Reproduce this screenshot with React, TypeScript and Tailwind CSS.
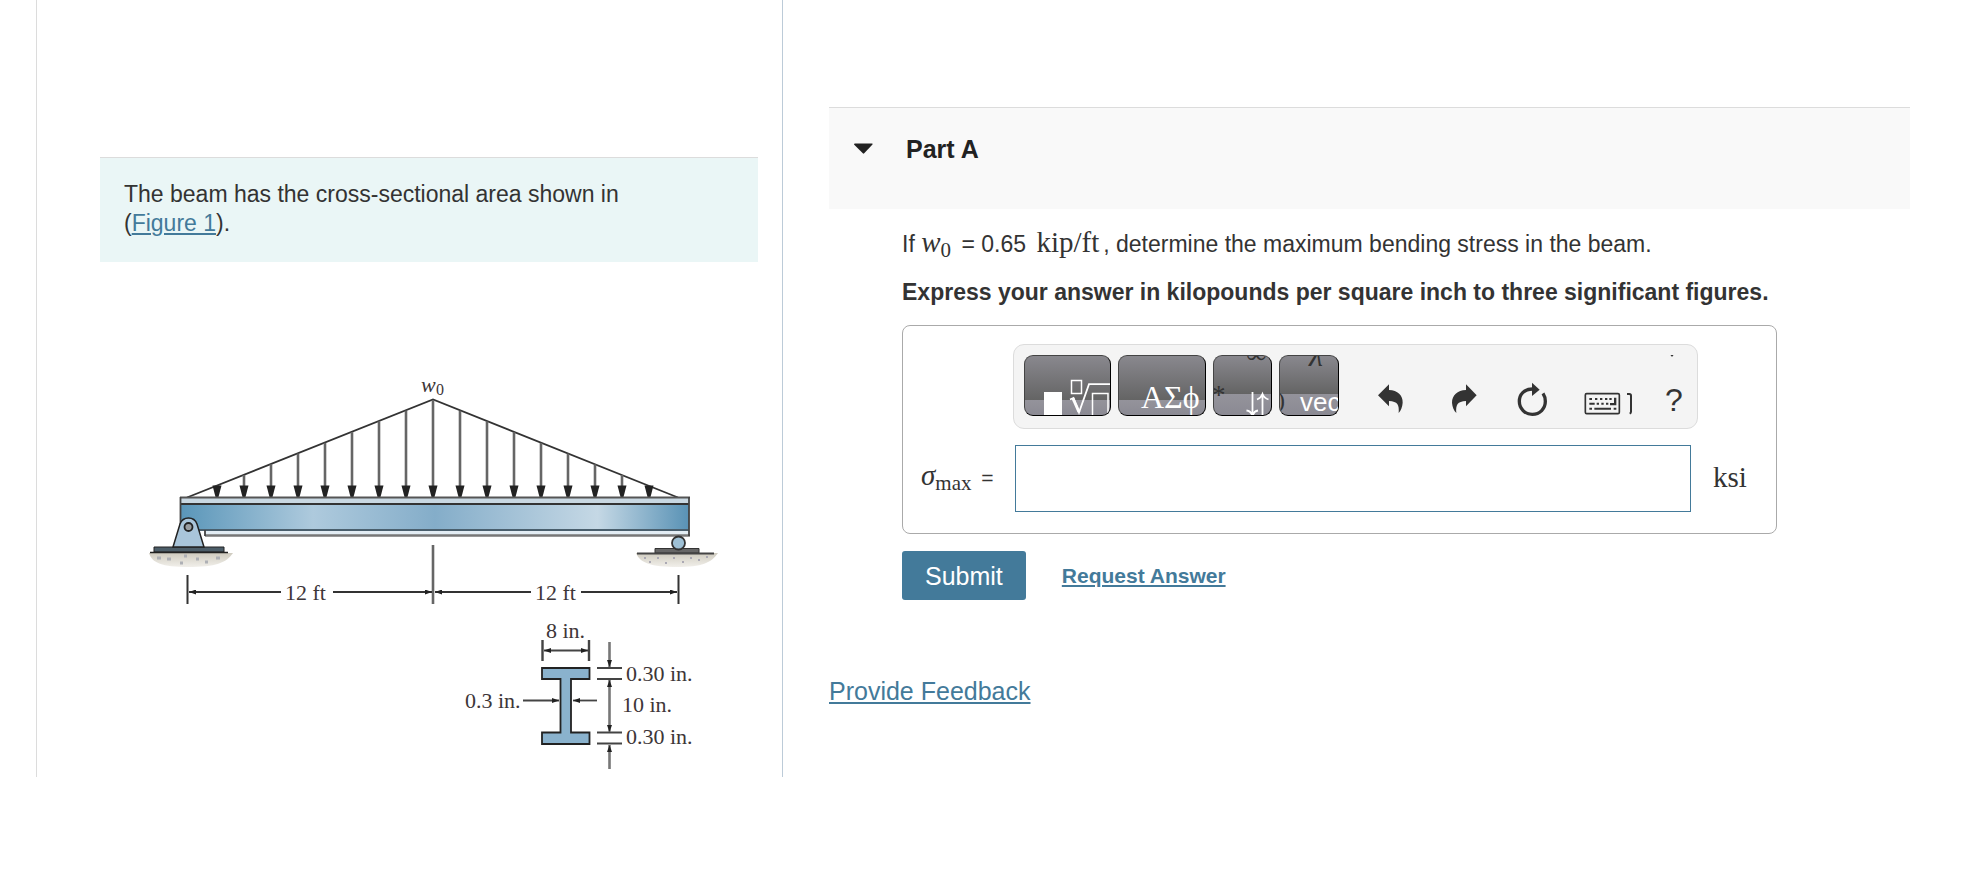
import type { ReactNode } from 'react';

const ARROW_XS = Array.from({ length: 17 }, (_, i) => 217 + i * 27);

function loadTop(x: number) {
  const peak = 433;
  return 400 + Math.abs(x - peak) * 0.397;
}

export default function App() {
  return (
    <main className="grid grid-cols-[747fr_1178fr] items-start bg-white pl-9 font-['Liberation_Sans',Arial,sans-serif] text-[#333]">
      <ProblemPanel />
      <AnswerPanel />
    </main>
  );
}

function ProblemPanel() {
  return (
    <section className="border-l border-l-[#dcdcdc] border-r border-r-[#bccbd8] pt-[157px] pl-[63px] pr-6">
      <div className="border-t border-[#dcdcdc] bg-[#eaf6f6] px-6 pt-[22px] pb-6 text-[23px] leading-[29px]">
        The beam has the cross-sectional area shown in
        <br />(
        <a href="#figure-1" className="text-[#437a9a] underline decoration-2 underline-offset-2">
          Figure 1
        </a>
        ).
      </div>
      <BeamFigure />
    </section>
  );
}

function AnswerPanel() {
  return (
    <section className="pt-[107px] pl-[46px] pr-[51px]">
      {/* Part header */}
      <header className="flex h-[102px] items-start border-t border-[#dcdcdc] bg-[#f9f9f9] pt-[25px] pl-[25px]">
        <button aria-label="Collapse part" className="flex h-8 w-[52px] items-center">
          <svg width="20" height="12" viewBox="0 0 20 12" fill="#222">
            <path d="M0 1.5Q0 .5 1 .5H18Q19 .5 18.5 1.5L10.2 10.3Q9.5 11 8.8 10.3L.5 2Z" />
          </svg>
        </button>
        <h2 className="text-[25px] leading-8 font-bold text-[#222]">Part A</h2>
      </header>

      <div className="pt-[11px] pl-[73px]">
        <p className="h-12 whitespace-nowrap text-[23px] leading-[48px]">
          If{' '}
          <Formula className="mr-1">
            <i>w</i>
            <sub className="text-[21px] leading-none">0</sub>
          </Formula>{' '}
          = 0.65 <Formula className="mx-1">kip/ft</Formula>, determine the maximum bending stress in the beam.
        </p>
        <p className="text-[23px] leading-[48px] font-bold whitespace-nowrap">
          Express your answer in kilopounds per square inch to three significant figures.
        </p>

        {/* Answer box */}
        <div className="mt-[9px] max-w-[875px] rounded-lg border border-[#aaa] pt-[18px] pb-[21px]">
          <div className="pr-[78px] pl-[110px]">
            <Toolbar />
          </div>
          <div className="mt-4 flex items-center">
            <label htmlFor="answer" className="w-[112px] shrink-0 pb-1 pl-[18px] text-[21px] leading-[29px] whitespace-nowrap">
              <Formula className="mr-1">
                <i>σ</i>
                <sub className="text-[21px] leading-none">max</sub>
              </Formula>{' '}
              =
            </label>
            <input id="answer" type="text" className="h-[67px] min-w-0 flex-1 border border-[#437a9a] bg-white px-3 text-[23px] outline-none" />
            <span className="w-[85px] shrink-0 pl-[22px]">
              <Formula>ksi</Formula>
            </span>
          </div>
        </div>

        <div className="mt-[17px] flex items-center gap-9">
          <button className="h-[49px] rounded-[3px] bg-[#437a9a] px-[23px] text-[25px] leading-[30px] text-white">Submit</button>
          <a href="#request" className="text-[21px] font-bold text-[#437a9a] underline decoration-2 underline-offset-2">
            Request Answer
          </a>
        </div>
      </div>

      <a href="#feedback" className="mt-[76px] inline-block text-[25px] leading-[30px] text-[#437a9a] underline decoration-2 underline-offset-2">
        Provide Feedback
      </a>
    </section>
  );
}

function Formula({ className = '', children }: { className?: string; children: ReactNode }) {
  return (
    <span className={`font-['Liberation_Serif','Times_New_Roman',serif] text-[29px] leading-none ${className}`}>{children}</span>
  );
}

function Toolbar() {
  return (
    <div className="flex h-[85px] items-start gap-[7px] rounded-[11px] border border-[#dcdcdc] bg-[#f4f4f4] pt-2.5 pl-2.5">
      <PaletteButton label="Templates" className="w-[87px] bg-[linear-gradient(#89888e_0%,#646464_75%,#94939b_75%,#8b8a93_100%)]">
        <path d="M19 36h18v24H19Z" fill="#fff" />
        <path d="M46.5 24.5h10v13h-10ZM67.5 60V37.5H83V60" fill="none" stroke="#fff" strokeWidth="1.5" />
        <path d="M45 43.5L48.5 42L54 56.5L64 28.2H86" fill="none" stroke="#fff" strokeWidth="1.8" />
        <path d="M48 42.5L54 56" stroke="#fff" strokeWidth="3" />
      </PaletteButton>
      <PaletteButton label="Symbols" className="w-[88px] bg-[linear-gradient(#89888e_0%,#646464_75%,#94939b_75%,#8b8a93_100%)]">
        <text x="22" y="52" fontSize="32" fill="#fff" className="font-['Liberation_Serif','DejaVu_Serif',serif]">
          ΑΣϕ
        </text>
      </PaletteButton>
      <PaletteButton label="Arrows" className="w-[59px] bg-[linear-gradient(#89888e_0%,#646464_64%,#94939b_64%,#8b8a93_100%)]">
        <text x="-2" y="48" fontSize="27" fill="#333" className="font-['Liberation_Serif',serif]">
          *
        </text>
        <text x="32" y="7" fontSize="29" fill="#333" className="font-['Liberation_Serif',serif]">
          ∞
        </text>
        <path d="M38.5 36V59M32.5 54.5Q37 55 38.5 60Q40 55 44 54.5M48.5 60V38M43 43.5Q47 42 48.5 38Q50 42 54.5 43.5" fill="none" stroke="#fff" strokeWidth="1.8" />
      </PaletteButton>
      <PaletteButton label="Vectors" className="w-[60px] bg-[linear-gradient(#89888e_0%,#646464_64%,#94939b_64%,#8b8a93_100%)]">
        <text x="29" y="10" fontSize="32" fontStyle="italic" fill="#333" className="font-['Liberation_Serif',serif]">
          λ
        </text>
        <text x="-3" y="52" fontSize="24" fill="#333" className="font-['Liberation_Serif',serif]">
          )
        </text>
        <text x="20" y="55" fontSize="26" fill="#fff" className="font-['Liberation_Sans',sans-serif]">
          vec
        </text>
      </PaletteButton>

      <div className="ml-[7px] flex">
        <button aria-label="Undo">
          <svg width="74" height="61" viewBox="69 120 222 183" fill="#333">
            <path d="M144 241L177 208V225C203 226 219 241 218 263C217 276 213 286 206 294C208 270 203 259 177 258V274Z" />
          </svg>
        </button>
        <button aria-label="Redo">
          <svg width="74" height="61" viewBox="291 120 222 183" fill="#333">
            <path d="M440 241L408 208V225C382 226 366 241 366 263C367 276 371 286 379 294C377 270 382 259 408 258V274Z" />
          </svg>
        </button>
        <button aria-label="Reset">
          <svg width="62" height="61" viewBox="513 120 186 183" fill="#333">
            <path d="M606 203L629 224L606 243Z" />
            <path d="M608 222C582 222 568 239 568 259C568 281 585 298 607 298C630 298 646 281 646 259C646 249 643 241 639 235" fill="none" stroke="#333" strokeWidth="10" />
          </svg>
        </button>
        <button aria-label="Keyboard shortcuts">
          <svg width="90" height="61" viewBox="699 120 270 183" fill="#333">
            <rect x="766" y="236" width="102" height="60" rx="4" fill="none" stroke="#333" strokeWidth="5" />
            <path d="M778 249h8v6h-8zM795 249h7v6h-7zM810 249h7v6h-7zM825 249h7v6h-7zM838 249h7v6h-7zM778 263h16v6h-16zM800 263h7v6h-7zM814 263h7v6h-7zM828 263h7v6h-7zM852 248h7v23h-19v-7h12zM778 278h8v6h-8zM793 278h50v6h-50zM851 278h8v6h-8z" />
            <path d="M891 237H898Q903 237 903 242V290Q903 294 899 296" fill="none" stroke="#333" strokeWidth="6" />
          </svg>
        </button>
        <button aria-label="Help">
          <svg width="40" height="61" viewBox="1653 355 40 61" fill="#333">
            <text x="1665" y="411" fontSize="32" className="font-['Liberation_Sans',sans-serif]">
              ?
            </text>
            <path d="M1670.5 355h3l-1 1.5h-1z" />
          </svg>
        </button>
      </div>
    </div>
  );
}

function PaletteButton({ label, className, children }: { label: string; className: string; children: ReactNode }) {
  return (
    <button
      aria-label={label}
      className={`h-[61px] shrink-0 overflow-hidden rounded-[9px] border border-t-[#444] border-r-black border-b-black border-l-[#444] ${className}`}
    >
      <svg width="100%" height="100%">
        {children}
      </svg>
    </button>
  );
}

function BeamFigure() {
  return (
    <svg
      id="figure-1"
      width="590"
      height="407"
      viewBox="140 370 590 407"
      className="mt-[108px] ml-10 block font-['Liberation_Serif','Times_New_Roman',serif]"
    >
      <defs>
        <linearGradient id="web">
          <stop offset="0" stopColor="#5a96b9" />
          <stop offset="0.26" stopColor="#aecadd" />
          <stop offset="0.5" stopColor="#84adc9" />
          <stop offset="0.82" stopColor="#c5d8e5" />
          <stop offset="1" stopColor="#5992b5" />
        </linearGradient>
        <linearGradient id="ground" x1="0" y1="0" x2="0" y2="1">
          <stop offset="0" stopColor="#cfcbbf" />
          <stop offset="1" stopColor="#f1efea" />
        </linearGradient>
        <marker id="dim" markerUnits="userSpaceOnUse" markerWidth="7" markerHeight="5" refX="7" refY="2.5" orient="auto-start-reverse">
          <path d="M0 0L7 2.5L0 5Z" fill="#222" />
        </marker>
      </defs>

      {/* Distributed load */}
      <path d="M187 497.5L433 399.5L678 497.5" fill="none" stroke="#333" strokeWidth="1.8" />
      {ARROW_XS.map((x) => (
        <g key={x}>
          <path d={`M${x} ${loadTop(x)}V490`} stroke="#666" strokeWidth="2.6" />
          <path d={`M${x - 4.5} 485.5h9l-3 11.5h-3z`} fill="#222" />
        </g>
      ))}

      {/* Beam */}
      <path d="M181 498H689V504H181Z" fill="#c9d8e2" />
      <path d="M181 504H689V530H181Z" fill="url(#web)" />
      <path d="M205 531H689V536H205Z" fill="#e3edf4" />
      <path d="M180 497.5H690" stroke="#555" strokeWidth="2" />
      <path d="M181 504H689" stroke="#333" strokeWidth="2" />
      <path d="M198 530H689" stroke="#4a5f6d" strokeWidth="1.8" />
      <path d="M205 535.5H690" stroke="#777" strokeWidth="2.6" />
      <path d="M180.5 497V531M689 497V536M205 530V536" stroke="#444" strokeWidth="1.8" />

      {/* Pin support */}
      <path d="M149 553H233C226 563 216 567 188 567C162 567 152 563 149 553Z" fill="url(#ground)" />
      <path d="M157 558h4M167 559h4M180 563h3M184 556h3M196 559h3M205 562h3M216 558h4" stroke="#aeb0b5" strokeWidth="3" />
      <path d="M154 547H224V552H154Z" fill="#4c5d68" stroke="#222" />
      <path d="M150 552.5H228" stroke="#222" strokeWidth="1.5" />
      <path d="M173 547L180 524C183 516 194 516 197 524L204 547Z" fill="#a9c5da" stroke="#222" strokeWidth="1.5" />
      <circle cx="188.5" cy="527" r="4" fill="#9a9ea1" stroke="#222" strokeWidth="1.8" />

      {/* Roller support */}
      <path d="M636 553H718C711 563 702 567 677 567C651 567 640 563 636 553Z" fill="url(#ground)" />
      <path d="M644 558h2M649 562h2M657 558h2M665 563h2M673 558h2M682 562h2M690 558h2M698 560h2M706 557h2" stroke="#aba9b4" strokeWidth="2" />
      <path d="M655 548.5H699V553H655Z" fill="#666" stroke="#333" />
      <path d="M637 553.5H714" stroke="#444" strokeWidth="2" />
      <circle cx="678.5" cy="543" r="6.5" fill="#9ec0d5" stroke="#333" strokeWidth="1.8" />

      {/* Span dimensions */}
      <g fill="none" stroke="#333" strokeWidth="1.8">
        <path d="M187.5 575V604M678.5 575V604" strokeWidth="2" />
        <path d="M433 545V604" stroke="#666" strokeWidth="2.6" />
        <path d="M281 592H189" markerEnd="url(#dim)" />
        <path d="M333 592H432" markerEnd="url(#dim)" />
        <path d="M531 592H435" markerEnd="url(#dim)" />
        <path d="M581 592H677" markerEnd="url(#dim)" />
      </g>

      {/* Cross section */}
      <path d="M542 668H589.5V679H571V732.5H589.5V744H542V732.5H560.5V679H542Z" fill="#8ab2cd" stroke="#222" strokeWidth="1.8" />
      <g fill="none" stroke="#444" strokeWidth="1.8">
        <path d="M542.5 640V661M589 640V661" strokeWidth="2.4" />
        <path d="M544 650.5H588" markerStart="url(#dim)" markerEnd="url(#dim)" />
        <path d="M597 668H622M597 679H622M597 732.5H622M597 743.5H622" />
        <path d="M609.5 642V667" stroke="#777" strokeWidth="2.6" markerEnd="url(#dim)" />
        <path d="M609.5 680V732" stroke="#777" strokeWidth="2.6" markerStart="url(#dim)" markerEnd="url(#dim)" />
        <path d="M609.5 769V745" stroke="#777" strokeWidth="2.6" markerEnd="url(#dim)" />
        <path d="M523 700.5H559" markerEnd="url(#dim)" />
        <path d="M597 700.5H573" markerEnd="url(#dim)" />
      </g>

      <g fontSize="22" fill="#3d3638">
        <text x="421" y="392" fontStyle="italic">
          w
        </text>
        <text x="436" y="395" fontSize="16">
          0
        </text>
        <text x="285" y="600">12 ft</text>
        <text x="535" y="600">12 ft</text>
        <text x="546" y="638">8 in.</text>
        <text x="626" y="681">0.30 in.</text>
        <text x="622" y="712">10 in.</text>
        <text x="626" y="744">0.30 in.</text>
        <text x="465" y="708">0.3 in.</text>
      </g>
    </svg>
  );
}
